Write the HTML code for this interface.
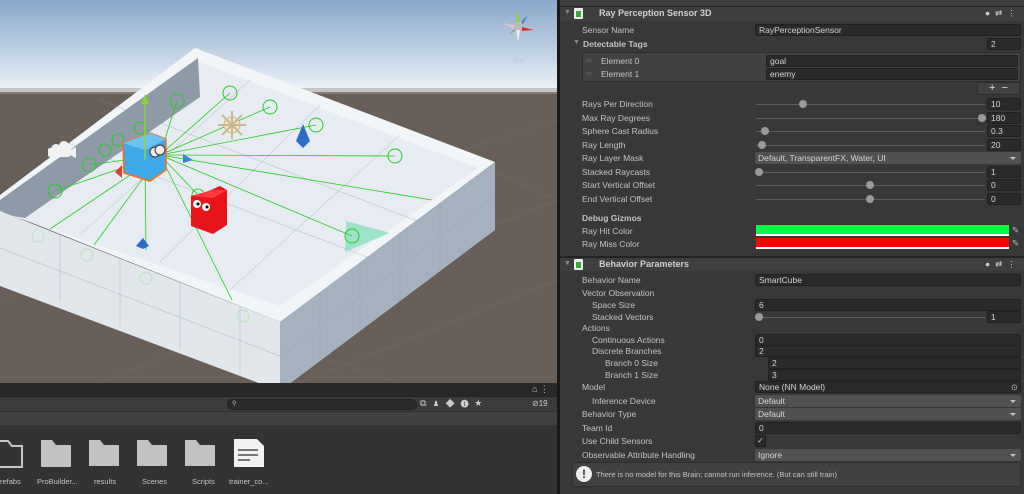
<!DOCTYPE html>
<html><head><meta charset="utf-8"><style>
*{margin:0;padding:0;box-sizing:border-box}
body{width:1024px;height:494px;overflow:hidden;background:#383838;font-family:"Liberation Sans",sans-serif;font-size:8.5px;color:#c4c4c4;position:relative}
.a{position:absolute;white-space:nowrap}
.lbl{position:absolute;left:582px;line-height:12px}
.fld{position:absolute;background:#2a2a2a;border:1px solid #212121;border-radius:2px;height:12px;line-height:10px;padding-left:3px;color:#d2d2d2}
.dd{position:absolute;background:#515151;border-radius:2px;height:12px;line-height:12px;padding-left:3px;color:#d8d8d8}
.dd:after{content:"";position:absolute;right:5px;top:5px;border:3px solid transparent;border-top:3px solid #c4c4c4}
.trk{position:absolute;height:1px;background:#5e5e5e}
.knob{position:absolute;width:8px;height:8px;border-radius:50%;background:#999}
.hdr{position:absolute;left:560px;width:464px;height:15px;background:#3e3e3e;border-top:1px solid #232323}
</style></head><body>
<!-- scene -->
<svg class="a" style="left:0;top:0" width="557" height="383" viewBox="0 0 557 383">
<defs><linearGradient id="sky" x1="0" y1="0" x2="0" y2="1"><stop offset="0" stop-color="#8aa6c8"/><stop offset="0.8" stop-color="#d9e4ef"/><stop offset="1" stop-color="#eef3f7"/></linearGradient></defs>
<rect width="557" height="92" fill="url(#sky)"/>
<rect y="92" width="557" height="291" fill="#675f58"/>
<rect y="88" width="557" height="6" fill="#a09a94" opacity=".5"/>
<g stroke="#7a726b" stroke-width=".6" opacity=".7">
<line x1="0" y1="300" x2="557" y2="120"/><line x1="100" y1="383" x2="557" y2="200"/><line x1="300" y1="383" x2="557" y2="280"/><line x1="0" y1="250" x2="400" y2="383"/><line x1="380" y1="120" x2="557" y2="200"/>
</g>
<polygon points="195,48 495,162 280,322 0,210 0,195" fill="#f2f5f8"/>
<polygon points="200,62 478,168 280,306 0,212 0,205" fill="#e6ecf1"/>
<polygon points="198,58 200,97 25,218 0,214 0,200" fill="#8f9aa8"/>
<polygon points="280,322 495,162 495,230 280,391" fill="#a6b1bf"/>
<polygon points="0,211 280,322 280,391 0,286" fill="#e2e7ec"/>
<g stroke="#8a97a6" stroke-width=".5" opacity=".6">
<line x1="0" y1="248" x2="280" y2="356"/><line x1="280" y1="356" x2="495" y2="196"/>
<line x1="320" y1="292" x2="320" y2="361"/><line x1="360" y1="262" x2="360" y2="331"/><line x1="400" y1="232" x2="400" y2="301"/><line x1="440" y1="203" x2="440" y2="272"/>
<line x1="60" y1="234" x2="60" y2="302"/><line x1="120" y1="258" x2="120" y2="326"/><line x1="180" y1="282" x2="180" y2="350"/><line x1="240" y1="306" x2="240" y2="374"/>
<line x1="100" y1="100" x2="420" y2="222"/><line x1="60" y1="140" x2="370" y2="258"/><line x1="250" y1="80" x2="80" y2="235"/><line x1="320" y1="105" x2="160" y2="262"/><line x1="400" y1="135" x2="230" y2="290"/>
</g>
<polygon points="346,221 390,233 345,252" fill="#7fe0b8" opacity=".7"/>
<g stroke="#22cc22" stroke-width=".8">
<line x1="160" y1="155" x2="230" y2="93"/><line x1="160" y1="155" x2="177" y2="101"/><line x1="160" y1="155" x2="270" y2="107"/><line x1="160" y1="155" x2="316" y2="125"/><line x1="160" y1="155" x2="395" y2="156"/><line x1="160" y1="155" x2="432" y2="200"/><line x1="160" y1="155" x2="352" y2="236"/><line x1="160" y1="155" x2="198" y2="195"/><line x1="160" y1="155" x2="55" y2="191"/><line x1="160" y1="155" x2="89" y2="165"/><line x1="160" y1="155" x2="50" y2="229"/><line x1="160" y1="155" x2="94" y2="245"/><line x1="145" y1="160" x2="146" y2="250"/><line x1="160" y1="155" x2="232" y2="300"/>
</g>
<g fill="none" stroke="#22cc22" stroke-width="1">
<circle cx="230" cy="93" r="7"/><circle cx="177" cy="101" r="7"/><circle cx="270" cy="107" r="7"/><circle cx="316" cy="125" r="7"/><circle cx="395" cy="156" r="7"/><circle cx="352" cy="236" r="7"/><circle cx="198" cy="195" r="6"/><circle cx="55" cy="191" r="7"/><circle cx="89" cy="165" r="7"/><circle cx="105" cy="150" r="6"/><circle cx="118" cy="140" r="6"/><circle cx="140" cy="128" r="6"/>
</g>
<g fill="none" stroke="#9be29b" stroke-width=".8" opacity=".7"><circle cx="38" cy="236" r="6"/><circle cx="87" cy="255" r="6"/><circle cx="146" cy="278" r="6"/><circle cx="243" cy="316" r="6"/></g>
<circle cx="232" cy="125" r="8" fill="#f3e6c8" stroke="#c8b890"/>
<g stroke="#c8b890" stroke-width="2"><line x1="232" y1="111" x2="232" y2="139"/><line x1="218" y1="125" x2="246" y2="125"/><line x1="222" y1="115" x2="242" y2="135"/><line x1="242" y1="115" x2="222" y2="135"/></g>
<polygon points="150,133 166,139 166,170 150,181 124,173 123,143" fill="#3fa9e8" stroke="#ff6a1a" stroke-width="1.5"/>
<polygon points="123,143 150,133 166,139 145,150" fill="#6cc3f0"/>
<circle cx="155" cy="152" r="5" fill="#eee" stroke="#333"/><circle cx="160" cy="150" r="5" fill="#eee" stroke="#333"/>
<line x1="145" y1="100" x2="145" y2="160" stroke="#8bd43a" stroke-width="1.5"/><polygon points="141,104 145,94 149,104" fill="#8bd43a"/>
<polygon points="115,172 122,165 122,178" fill="#e0402a"/><polygon points="183,154 193,160 183,163" fill="#3b7fe0"/>
<polygon points="197,196 220,186 227,190 227,225 213,234 191,226 191,196" fill="#e8141c"/>
<polygon points="191,196 212,190 227,190 213,198" fill="#ff3c3c"/>
<circle cx="197" cy="204" r="4" fill="#fff"/><circle cx="206" cy="207" r="4" fill="#fff"/><circle cx="198" cy="204" r="1.5" fill="#000"/><circle cx="207" cy="207" r="1.5" fill="#000"/>
<polygon points="303,124 310,141 303,148 296,141" fill="#2f6cc8"/><polygon points="143,238 149,246 143,249 136,246" fill="#2f6cc8"/>
<g fill="#f2f2f2"><circle cx="56" cy="149" r="5"/><circle cx="64" cy="146" r="5"/><rect x="48" y="148" width="22" height="9" rx="2"/><polygon points="70,150 76,147 76,158 70,155"/></g>
<g transform="translate(518,26)"><polygon points="-2,-4 0,-16 2,-4" fill="#8fd137"/><polygon points="2,-3 10,-11 5,-2" fill="#3d7fe0"/><polygon points="4,1 16,4 4,5" fill="#d9322c"/><polygon points="-4,-1 -16,-3 -4,3" fill="#ccc"/><polygon points="-2,4 0,16 2,4" fill="#eee"/><polygon points="-3,2 -9,9 -2,4" fill="#999"/><rect x="-4" y="-4" width="8" height="8" fill="#bbb"/></g>
<text x="513" y="63" font-size="8" fill="#b8c4d2" font-family="Liberation Sans">Iso</text>
</svg>
<div class="a" style="left:557px;top:0;width:3px;height:494px;background:#191919"></div>
<!-- project -->
<div class="a" style="left:0;top:383px;width:557px;height:13px;background:#282828"></div>
<div class="a" style="left:532px;top:384px;font-size:9px;color:#ccc">⌂ ⋮</div>
<div class="a" style="left:0;top:396px;width:557px;height:1px;background:#222"></div>
<div class="a" style="left:0;top:397px;width:557px;height:14px;background:#3c3c3c"></div>
<div class="a" style="left:227px;top:399px;width:190px;height:11px;background:#2a2a2a;border:1px solid #222;border-radius:5px;font-size:6px;padding-left:4px">⚲</div>
<div class="a" style="left:420px;top:398px;font-size:9px;color:#ccc;letter-spacing:6px">⧉♟◆❶★</div>
<div class="a" style="left:532px;top:399px;font-size:8px;color:#ccc">⊘19</div>
<div class="a" style="left:0;top:411px;width:557px;height:1px;background:#2f2f2f"></div>
<div class="a" style="left:0;top:412px;width:557px;height:13px;background:#404040"></div>
<div class="a" style="left:0;top:425px;width:557px;height:69px;background:#333"></div>
<svg class="a" style="left:0;top:436px" width="300" height="40">
<path d="M-4 5 H8 L12 10 H22 V31 H-4 Z" fill="none" stroke="#c4c4c4" stroke-width="2"/>
<g fill="#c2c2c2"><path d="M41 4 H52 L56 9 H71 V30 Q71 31 70 31 H42 Q41 31 41 30 Z"/><path d="M89 4 H100 L104 9 H119 V30 H89 Z"/><path d="M137 4 H148 L152 9 H167 V30 H137 Z"/><path d="M185 4 H196 L200 9 H215 V30 H185 Z"/></g>
<path d="M234 3 H257 L264 10 V31 H234 Z" fill="#f2f2f2"/><g stroke="#777" stroke-width="2"><line x1="238" y1="14" x2="258" y2="14"/><line x1="238" y1="19" x2="258" y2="19"/><line x1="238" y1="24" x2="250" y2="24"/></g>
</svg>
<div class="a" style="left:0;top:477px;font-size:7.5px;color:#c4c4c4">refabs</div>
<div class="a" style="left:37px;top:477px;font-size:7.5px;color:#c4c4c4">ProBuilder...</div>
<div class="a" style="left:94px;top:477px;font-size:7.5px;color:#c4c4c4">results</div>
<div class="a" style="left:142px;top:477px;font-size:7.5px;color:#c4c4c4">Scenes</div>
<div class="a" style="left:192px;top:477px;font-size:7.5px;color:#c4c4c4">Scripts</div>
<div class="a" style="left:229px;top:477px;font-size:7.5px;color:#c4c4c4">trainer_co...</div>
<!-- inspector -->
<div class="a" style="left:560px;top:0;width:464px;height:6px;background:#3e3e3e"></div>
<div class="hdr" style="top:6px"></div>
<div class="a" style="left:564px;top:9px;font-size:7px;color:#888">▼</div>
<div class="a" style="left:574px;top:8px;width:9px;height:11px;background:#eee;border-radius:1px"></div>
<div class="a" style="left:576px;top:11px;width:5px;height:6px;background:#3a3"></div>
<div class="a" style="left:599px;top:8px;font-weight:bold;color:#d0d0d0;font-size:9px">Ray Perception Sensor 3D</div>
<div class="a" style="left:985px;top:8px;color:#ccc;letter-spacing:5px">●⇄⋮</div>
<div class="lbl" style="top:24px">Sensor Name</div>
<div class="fld" style="left:755px;top:24px;width:266px">RayPerceptionSensor</div>
<div class="a" style="left:573px;top:39px;font-size:7px;color:#888">▼</div>
<div class="lbl" style="top:38px;left:583px;font-weight:bold">Detectable Tags</div>
<div class="fld" style="left:987px;top:38px;width:34px">2</div>
<div class="a" style="left:582px;top:52px;width:439px;height:30px;background:#414141;border:1px solid #2c2c2c;border-radius:2px"></div>
<div class="a" style="left:586px;top:55px;color:#666">═</div><div class="a" style="left:586px;top:68px;color:#666">═</div>
<div class="lbl" style="top:55px;left:601px">Element 0</div><div class="lbl" style="top:68px;left:601px">Element 1</div>
<div class="fld" style="left:766px;top:55px;width:252px">goal</div>
<div class="fld" style="left:766px;top:68px;width:252px">enemy</div>
<div class="a" style="left:977px;top:82px;width:43px;height:13px;background:#414141;border:1px solid #2c2c2c;text-align:center;font-size:11px;line-height:11px;color:#ddd">+ &nbsp;−</div>
<!-- sliders -->
<div class="lbl" style="top:98px">Rays Per Direction</div><div class="trk" style="left:756px;top:104px;width:229px"></div><div class="knob" style="left:799px;top:100px"></div><div class="fld" style="left:987px;top:98px;width:34px">10</div>
<div class="lbl" style="top:112px">Max Ray Degrees</div><div class="trk" style="left:756px;top:118px;width:229px"></div><div class="knob" style="left:978px;top:114px"></div><div class="fld" style="left:987px;top:112px;width:34px">180</div>
<div class="lbl" style="top:125px">Sphere Cast Radius</div><div class="trk" style="left:756px;top:131px;width:229px"></div><div class="knob" style="left:761px;top:127px"></div><div class="fld" style="left:987px;top:125px;width:34px">0.3</div>
<div class="lbl" style="top:139px">Ray Length</div><div class="trk" style="left:756px;top:145px;width:229px"></div><div class="knob" style="left:758px;top:141px"></div><div class="fld" style="left:987px;top:139px;width:34px">20</div>
<div class="lbl" style="top:152px">Ray Layer Mask</div><div class="dd" style="left:755px;top:152px;width:266px">Default, TransparentFX, Water, UI</div>
<div class="lbl" style="top:166px">Stacked Raycasts</div><div class="trk" style="left:756px;top:172px;width:229px"></div><div class="knob" style="left:755px;top:168px"></div><div class="fld" style="left:987px;top:166px;width:34px">1</div>
<div class="lbl" style="top:179px">Start Vertical Offset</div><div class="trk" style="left:756px;top:185px;width:229px"></div><div class="knob" style="left:866px;top:181px"></div><div class="fld" style="left:987px;top:179px;width:34px">0</div>
<div class="lbl" style="top:193px">End Vertical Offset</div><div class="trk" style="left:756px;top:199px;width:229px"></div><div class="knob" style="left:866px;top:195px"></div><div class="fld" style="left:987px;top:193px;width:34px">0</div>
<div class="lbl" style="top:212px;font-weight:bold">Debug Gizmos</div>
<div class="lbl" style="top:225px">Ray Hit Color</div><div class="a" style="left:756px;top:225px;width:253px;height:11px;background:#00ff44;border-bottom:2px solid #fff"></div><div class="a" style="left:1012px;top:225px;color:#bbb">✎</div>
<div class="lbl" style="top:238px">Ray Miss Color</div><div class="a" style="left:756px;top:238px;width:253px;height:11px;background:#ff0000;border-bottom:2px solid #fff"></div><div class="a" style="left:1012px;top:238px;color:#bbb">✎</div>
<div class="hdr" style="top:256px;border-top:2px solid #232323"></div>
<div class="a" style="left:564px;top:260px;font-size:7px;color:#888">▼</div>
<div class="a" style="left:574px;top:259px;width:9px;height:11px;background:#eee;border-radius:1px"></div>
<div class="a" style="left:576px;top:262px;width:5px;height:6px;background:#3a3"></div>
<div class="a" style="left:599px;top:259px;font-weight:bold;color:#d0d0d0;font-size:9px">Behavior Parameters</div>
<div class="a" style="left:985px;top:259px;color:#ccc;letter-spacing:5px">●⇄⋮</div>
<div class="lbl" style="top:274px">Behavior Name</div><div class="fld" style="left:755px;top:274px;width:266px">SmartCube</div>
<div class="lbl" style="top:287px">Vector Observation</div>
<div class="lbl" style="top:299px;left:592px">Space Size</div><div class="fld" style="left:755px;top:299px;width:266px">6</div>
<div class="lbl" style="top:311px;left:592px">Stacked Vectors</div><div class="trk" style="left:756px;top:317px;width:229px"></div><div class="knob" style="left:755px;top:313px"></div><div class="fld" style="left:987px;top:311px;width:34px">1</div>
<div class="lbl" style="top:322px">Actions</div>
<div class="lbl" style="top:334px;left:592px">Continuous Actions</div><div class="fld" style="left:755px;top:334px;width:266px">0</div>
<div class="lbl" style="top:345px;left:592px">Discrete Branches</div><div class="fld" style="left:755px;top:345px;width:266px">2</div>
<div class="lbl" style="top:357px;left:605px">Branch 0 Size</div><div class="fld" style="left:768px;top:357px;width:253px">2</div>
<div class="lbl" style="top:369px;left:605px">Branch 1 Size</div><div class="fld" style="left:768px;top:369px;width:253px">3</div>
<div class="lbl" style="top:381px">Model</div><div class="fld" style="left:755px;top:381px;width:266px">None (NN Model)<span style="position:absolute;right:2px;color:#bbb">⊙</span></div>
<div class="lbl" style="top:395px;left:592px">Inference Device</div><div class="dd" style="left:755px;top:395px;width:266px">Default</div>
<div class="lbl" style="top:408px">Behavior Type</div><div class="dd" style="left:755px;top:408px;width:266px">Default</div>
<div class="lbl" style="top:422px">Team Id</div><div class="fld" style="left:755px;top:422px;width:266px">0</div>
<div class="lbl" style="top:435px">Use Child Sensors</div><div class="fld" style="left:755px;top:435px;width:11px;padding:0;text-align:center;font-size:8px">✓</div>
<div class="lbl" style="top:449px">Observable Attribute Handling</div><div class="dd" style="left:755px;top:449px;width:266px">Ignore</div>
<div class="a" style="left:572px;top:462px;width:449px;height:25px;background:#414141;border:1px solid #2e2e2e;border-radius:2px"></div>
<div class="a" style="left:576px;top:466px;width:16px;height:16px;border-radius:50%;background:#eee;color:#333;font-weight:bold;font-size:12px;text-align:center;line-height:16px">!</div>
<div class="a" style="left:596px;top:470px;font-size:7.5px;color:#c4c4c4">There is no model for this Brain; cannot run inference. (But can still train)</div>
</body></html>
